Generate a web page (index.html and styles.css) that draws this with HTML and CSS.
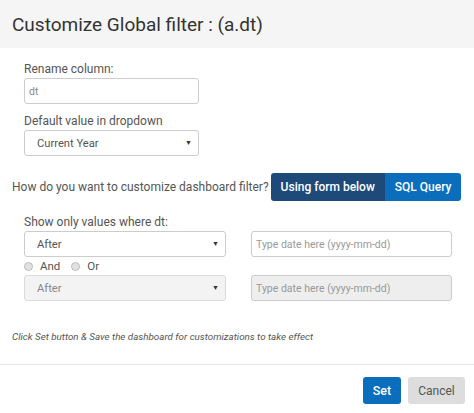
FILE: index.html
```html
<!DOCTYPE html>
<html>
  <head>
    <title>Customize Global filter</title>
    <link rel="stylesheet" href="styles.css">
  </head>
  <body>
  <div class="modal">
    <div class="modal-header">
      <h4 class="modal-title">Customize Global filter : (a.dt)</h4>
    </div>
    <div class="modal-body">
      <div class="form-group">
        <label class="lbl" for="rename">Rename column:</label>
        <input type="text" class="form-control small" id="rename" value="dt"/>
      </div>
      <div class="form-group">
        <label class="lbl" for="defval">Default value in dropdown</label>
        <div class="select-wrap small">
          <select class="form-control" id="defval">
            <option>Current Year</option>
          </select>
        </div>
      </div>

      <div class="mode-row">
        <span>How do you want to customize dashboard filter?</span>
        <div class="btn-group">
          <button class="btn btn-dark">Using form below</button>
          <button class="btn btn-primary">SQL Query</button>
        </div>
      </div>

      <div class="form-group filter">
        <label class="lbl">Show only values where dt:</label>
        <div class="filter-row">
          <div class="select-wrap">
            <select class="form-control"><option>After</option></select>
          </div>
          <input type="text" class="form-control date" placeholder="Type date here (yyyy-mm-dd)"/>
        </div>
        <div class="radio-row">
          <label><input type="radio" name="op"/> And</label>
          <label><input type="radio" name="op"/> Or</label>
        </div>
        <div class="filter-row">
          <div class="select-wrap">
            <select class="form-control" disabled><option>After</option></select>
          </div>
          <input type="text" class="form-control date" placeholder="Type date here (yyyy-mm-dd)" disabled/>
        </div>
      </div>

      <p class="note">Click Set button &amp; Save the dashboard for customizations to take effect</p>
    </div>
    <div class="modal-footer">
      <button class="btn btn-primary btn-set">Set</button>
      <button class="btn btn-default">Cancel</button>
    </div>
  </div>
  </body>
</html>
```

FILE: styles.css
```css
html, body
{
	margin: 0;
	padding: 0;
	background: #fff;
}
body
{
	font-family: Roboto, "Liberation Sans", sans-serif;
	font-size: 12px;
	color: #555;
}

.modal-header {
    height: 48px;
    background-color: #f5f5f5;
    padding: 0 12px;
    display: flex;
    align-items: center;
}
.modal-title {
    margin: 0;
    font-size: 19px;
    font-weight: 400;
    color: #333;
}

.modal-body {
    padding: 13px 0 19px 0;
    border-bottom: 1px solid #e5e5e5;
}

.form-group {
    margin: 0 0 9px 24px;
}
.lbl {
    display: block;
    line-height: 16px;
    margin-bottom: 1px;
    font-weight: 400;
    color: #555;
}

.form-control {
    box-sizing: border-box;
    height: 26px;
    border: 1px solid #ccc;
    border-radius: 3px;
    background-color: #fff;
    font-family: Roboto, "Liberation Sans", sans-serif;
    font-size: 11.2px;
    color: #555;
    padding: 0 12px;
    margin: 0;
    width: 100%;
}
input.form-control {
    padding: 0 4px;
    font-size: 10.5px;
    color: #888;
}
input.form-control::placeholder {
    color: #999;
}
.form-control:disabled {
    background-color: #eee;
}
.small {
    width: 175px;
}
select.form-control {
    -webkit-appearance: none;
    appearance: none;
}

.select-wrap {
    position: relative;
}
.select-wrap:after {
    content: "\25BC";
    position: absolute;
    right: 7px;
    top: 9px;
    font-size: 7px;
    color: #333;
    pointer-events: none;
}

.mode-row {
    display: flex;
    align-items: center;
    gap: 2px;
    margin: 17px 0 13px 12px;
    white-space: nowrap;
    color: #555;
}
.btn-group {
    display: flex;
    flex-shrink: 0;
}
.btn-group .btn:first-child {
    border-radius: 3px 0 0 3px;
}
.btn-group .btn:last-child {
    border-radius: 0 3px 3px 0;
}

.btn {
    border: none;
    border-radius: 3px;
    font-family: Roboto, "Liberation Sans", sans-serif;
    font-size: 12px;
    font-weight: 500;
    height: 28px;
    padding: 0 10px;
    white-space: nowrap;
    cursor: pointer;
}
.btn-dark {
    background-color: #1d4a79;
    color: #fff;
}
.btn-primary {
    background-color: #0a6ebd;
    color: #fff;
}
.btn-default {
    background-color: #ddd;
    color: #555;
    font-weight: 400;
    width: 57px;
}

.filter-row {
    display: flex;
    gap: 25px;
    width: 428px;
}
.filter-row .select-wrap {
    width: 202px;
}
.filter-row .date {
    width: 201px;
}

.radio-row {
    display: flex;
    align-items: center;
    gap: 11px;
    height: 18px;
    font-size: 11.5px;
}
.radio-row label {
    display: flex;
    align-items: center;
    gap: 7px;
    font-weight: 400;
    color: #555;
}
.radio-row input {
    -webkit-appearance: none;
    appearance: none;
    margin: 0;
    width: 9px;
    height: 9px;
    border-radius: 50%;
    border: 1px solid #bbb;
    background: #e2e2e2;
}

.note {
    margin: 28px 0 0 12px;
    line-height: 16px;
    font-size: 9.8px;
    font-style: italic;
    color: #555;
}

.modal-footer {
    display: flex;
    justify-content: flex-end;
    gap: 7px;
    padding: 12px 9px 0 0;
}
.btn-set {
    width: 38px;
    height: 27px;
    font-size: 12.5px;
    padding: 0;
}
.modal-footer .btn-default {
    height: 27px;
    padding: 0;
}
```
